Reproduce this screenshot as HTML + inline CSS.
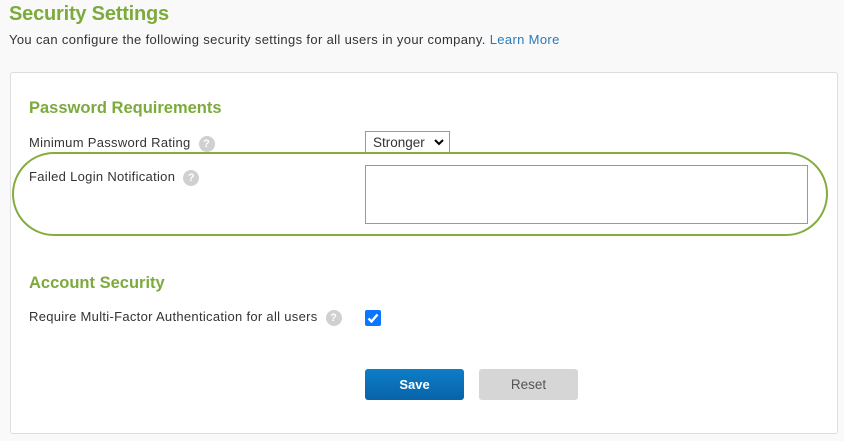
<!DOCTYPE html>
<html><head><style>
body{margin:0;width:844px;height:441px;background:#f9f9f9;font-family:"Liberation Sans",sans-serif;position:relative;overflow:hidden;color:#333}
.a{position:absolute;white-space:nowrap}
.t{left:9px;top:3px;font-size:20px;color:#7cab3c;font-weight:bold;letter-spacing:-0.2px}
.s{left:9px;top:32px;font-size:13px;color:#333;letter-spacing:0.35px}
.s span{color:#2a7ab8}
.panel{position:absolute;left:10px;top:72px;width:826px;height:360px;background:#fff;border:1px solid #ddd;border-radius:3px}
.h{font-size:16.5px;color:#7cab3c;font-weight:bold}
.l{font-size:13px;color:#333;letter-spacing:0.3px}
.q{display:inline-block;width:16px;height:16px;border-radius:50%;background:#d0d0d0;color:#fff;font-size:11px;font-weight:bold;text-align:center;line-height:16px;margin-left:8px;vertical-align:middle;letter-spacing:0}
.btn{position:absolute;top:369px;width:99px;height:31px;border-radius:3px;font-size:13px;font-weight:bold;text-align:center;line-height:31px}
</style></head><body>
<div class="a t">Security Settings</div>
<div class="a s">You can configure the following security settings for all users in your company. <span>Learn More</span></div>
<div class="panel"></div>
<div class="a h" style="left:29px;top:99px">Password Requirements</div>
<div class="a l" style="left:29px;top:135px">Minimum Password Rating<span class="q">?</span></div>
<div class="a" style="left:365px;top:131px;width:85px;height:23px;border:1px solid #999;box-sizing:border-box;font-size:13.5px;line-height:21px;padding-left:7px;background:#fff">Stronger<svg style="position:absolute;right:5px;top:7px" width="10" height="7" viewBox="0 0 10 7"><path d="M1 1l4 4 4-4" stroke="#000" stroke-width="2" fill="none"/></svg></div>
<div class="a l" style="left:29px;top:169px">Failed Login Notification<span class="q">?</span></div>
<div class="a" style="left:365px;top:165px;width:443px;height:59px;border:1px solid #999;box-sizing:border-box;background:#fff"></div>
<div class="a" style="left:12px;top:152px;width:816px;height:84px;border:2.5px solid #84ad3e;border-radius:44px;box-sizing:border-box"></div>
<div class="a h" style="left:29px;top:274px">Account Security</div>
<div class="a l" style="left:29px;top:309px">Require Multi-Factor Authentication for all users<span class="q">?</span></div>
<div class="a" style="left:365px;top:310px;width:16px;height:16px;background:#0a75ff;border-radius:2px"><svg width="16" height="16" viewBox="0 0 16 16"><path d="M3.5 8.5l3 3 6-7" stroke="#fff" stroke-width="2.4" fill="none"/></svg></div>
<div class="btn" style="left:365px;background:linear-gradient(#0c7ec8,#0863a8);color:#fff">Save</div>
<div class="btn" style="left:479px;background:#d6d6d6;color:#555;font-weight:normal;font-size:13.5px">Reset</div>
</body></html>
